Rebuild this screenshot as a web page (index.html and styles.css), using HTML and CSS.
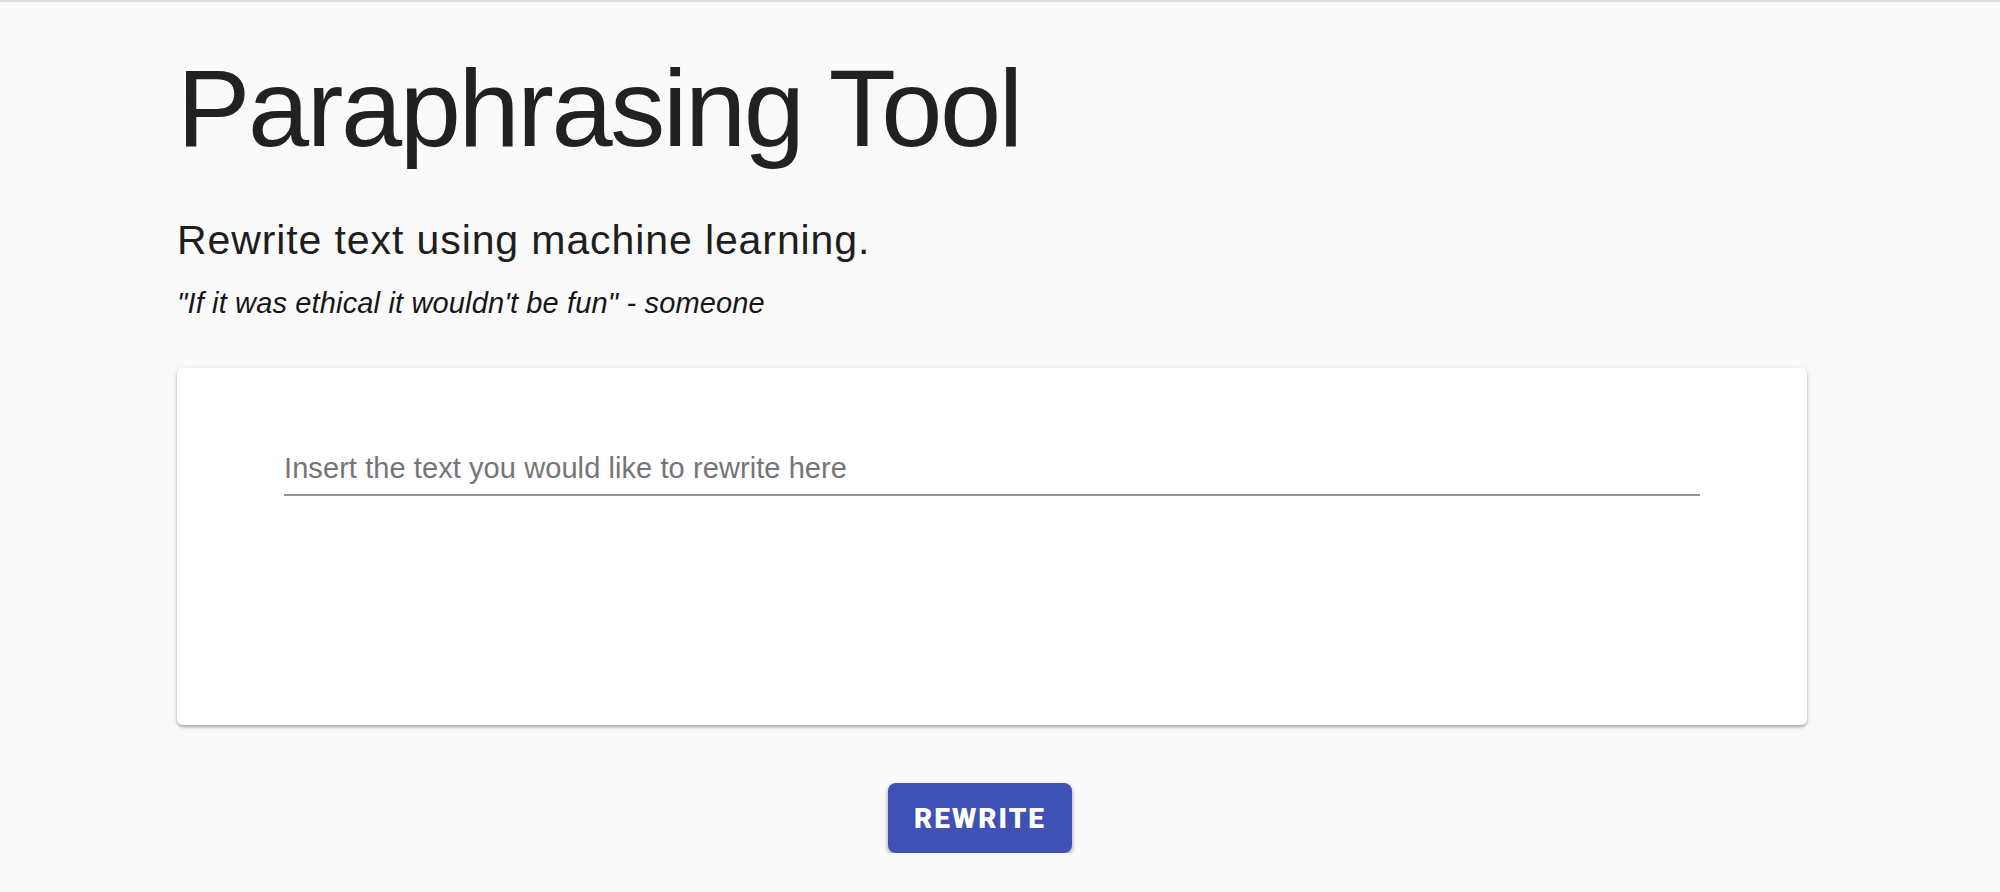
FILE: index.html
```html
<!DOCTYPE html>
<html>
<head>
  <title>Paraphrasing Tool</title>
  <link rel="stylesheet" href="styles.css">
</head>
<body>
  <div class="page">
    <h1 class="title">Paraphrasing Tool</h1>
    <h2 class="subtitle">Rewrite text using machine learning.</h2>
    <p class="quote">"If it was ethical it wouldn't be fun" - someone</p>
    <div class="card">
      <div class="field">
        <input type="text" id="source" placeholder="Insert the text you would like to rewrite here">
      </div>
    </div>
    <div class="actions">
      <button class="rewrite-button" id="rewrite">Rewrite</button>
    </div>
  </div>
</body>
</html>
```

FILE: styles.css
```css
body {
  margin: 0;
  padding: 0;
  background-color: #fafafa;
  border-top: 2px solid #dcdce0;
  font-family: "Liberation Sans", Helvetica, Arial, sans-serif;
  color: #212121;
}
.page {
  padding: 50px 193px 0 177px;
}
.title {
  margin: 0;
  font-size: 110px;
  font-weight: normal;
  line-height: 112px;
  letter-spacing: -2.4px;
  color: #212121;
}
.subtitle {
  margin: 52px 0 0 0;
  font-size: 41px;
  font-weight: normal;
  line-height: 48px;
  letter-spacing: 0.9px;
  color: #1e1e1e;
}
.quote {
  margin: 22px 0 0 0;
  font-size: 29px;
  font-style: italic;
  line-height: 34px;
  letter-spacing: 0.15px;
  color: #161616;
}
.card {
  box-sizing: border-box;
  margin-top: 48px;
  height: 357px;
  padding: 83px 107px;
  background-color: #ffffff;
  border-radius: 6px;
  box-shadow: 0 2px 3px rgba(0, 0, 0, 0.3), 0 1px 8px rgba(0, 0, 0, 0.08);
}
.field input {
  box-sizing: content-box;
  display: block;
  width: 100%;
  height: 34px;
  margin: 0;
  padding: 0 0 9px 0;
  border: none;
  border-bottom: 2px solid #949494;
  background: none;
  outline: none;
  font-family: "Liberation Sans", Helvetica, Arial, sans-serif;
  font-size: 29px;
  line-height: 34px;
  letter-spacing: 0.08px;
  color: #212121;
}
.field input::placeholder {
  color: #757575;
  opacity: 1;
}
.actions {
  display: flex;
  justify-content: center;
  margin-top: 58px;
  padding-right: 24px;
}
.rewrite-button {
  width: 184px;
  height: 70px;
  padding: 0;
  border: none;
  border-radius: 8px;
  background-color: #3f51b5;
  color: #ffffff;
  font-family: Roboto, "Liberation Sans", sans-serif;
  font-size: 28px;
  font-weight: 900;
  letter-spacing: 2px;
  text-transform: uppercase;
  cursor: pointer;
  box-shadow: 0 3px 4px rgba(0, 0, 0, 0.3), 0 1px 6px rgba(0, 0, 0, 0.1);
}
```
